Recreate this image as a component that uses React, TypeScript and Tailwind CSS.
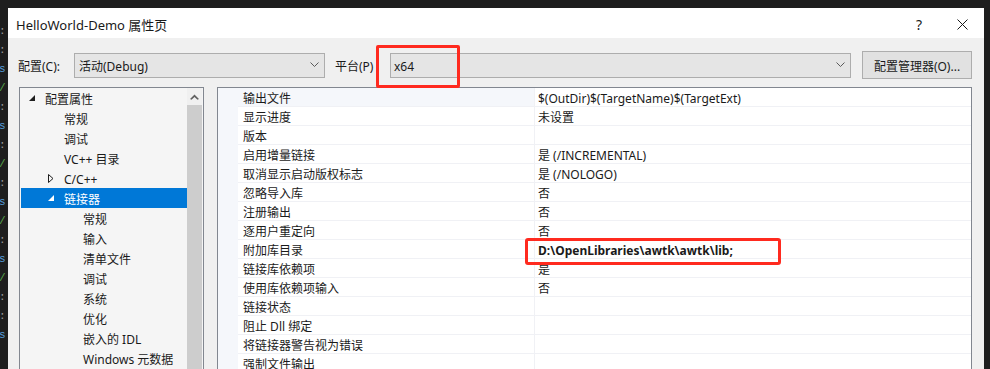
import React from 'react';

const FONT = { fontFamily: '"Noto Sans", "Noto Sans CJK SC", sans-serif' };

type TreeItem = { label: string; level: number; arrow?: 'open' | 'closed'; selected?: boolean };

const treeItems: TreeItem[] = [
  { label: '配置属性', level: 0, arrow: 'open' },
  { label: '常规', level: 1 },
  { label: '调试', level: 1 },
  { label: 'VC++ 目录', level: 1 },
  { label: 'C/C++', level: 1, arrow: 'closed' },
  { label: '链接器', level: 1, arrow: 'open', selected: true },
  { label: '常规', level: 2 },
  { label: '输入', level: 2 },
  { label: '清单文件', level: 2 },
  { label: '调试', level: 2 },
  { label: '系统', level: 2 },
  { label: '优化', level: 2 },
  { label: '嵌入的 IDL', level: 2 },
  { label: 'Windows 元数据', level: 2 },
];

const levelPad = ['pl-[8px]', 'pl-[27px]', 'pl-[46px]'];

const props: { name: string; value: string; bold?: boolean }[] = [
  { name: '输出文件', value: '$(OutDir)$(TargetName)$(TargetExt)' },
  { name: '显示进度', value: '未设置' },
  { name: '版本', value: '' },
  { name: '启用增量链接', value: '是 (/INCREMENTAL)' },
  { name: '取消显示启动版权标志', value: '是 (/NOLOGO)' },
  { name: '忽略导入库', value: '否' },
  { name: '注册输出', value: '否' },
  { name: '逐用户重定向', value: '否' },
  { name: '附加库目录', value: 'D:\\OpenLibraries\\awtk\\awtk\\lib;', bold: true },
  { name: '链接库依赖项', value: '是' },
  { name: '使用库依赖项输入', value: '否' },
  { name: '链接状态', value: '' },
  { name: '阻止 Dll 绑定', value: '' },
  { name: '将链接器警告视为错误', value: '' },
  { name: '强制文件输出', value: '' },
];

// bits of the code editor peeking out behind the dialog
const editorBits = [
  { t: ':', c: 'text-[#9a9a9a]' },
  { t: ':', c: 'text-[#9a9a9a]' },
  { t: 's', c: 'text-[#569cd6]' },
  { t: '/', c: 'text-[#57a64a]' },
  { t: ':', c: 'text-[#9a9a9a]' },
  { t: 's', c: 'text-[#569cd6]' },
  { t: ':', c: 'text-[#9a9a9a]' },
  { t: '/', c: 'text-[#57a64a]' },
  { t: ':', c: 'text-[#9a9a9a]' },
  { t: 's', c: 'text-[#569cd6]' },
  { t: '/', c: 'text-[#57a64a]' },
  { t: ':', c: 'text-[#9a9a9a]' },
  { t: 's', c: 'text-[#569cd6]' },
  { t: '/', c: 'text-[#57a64a]' },
  { t: ':', c: 'text-[#9a9a9a]' },
  { t: ':', c: 'text-[#9a9a9a]' },
  { t: 's', c: 'text-[#569cd6]' },
];

const Chevron = () => (
  <svg width="9" height="6" viewBox="0 0 9 6" fill="none" stroke="#5a5a5a" strokeWidth="1">
    <path d="M0.5 0.5 L4.5 4.5 L8.5 0.5" />
  </svg>
);

const TreeArrow = ({ kind, selected }: { kind: 'open' | 'closed'; selected?: boolean }) =>
  kind === 'open' ? (
    <svg width="7" height="7" viewBox="0 0 7 7">
      <path d="M6 0 L6 6 L0 6 Z" fill={selected ? '#ffffff' : '#1e1e1e'} />
    </svg>
  ) : (
    <svg width="6" height="9" viewBox="0 0 6 9" fill="none" stroke="#1e1e1e" strokeWidth="1">
      <path d="M0.5 0.5 L5 4.5 L0.5 8.5 Z" />
    </svg>
  );

export default function App() {
  return (
    <div className="w-[990px] h-[369px] bg-[#1e1e1e] flex items-start overflow-hidden" style={FONT}>
      {/* editor gutter behind */}
      <div className="w-[8px] h-[369px] shrink-0 flex flex-col pt-[22px] overflow-hidden font-mono text-[11px] leading-[19px]">
        {editorBits.map((b, i) => (
          <span key={i} className={`${b.c} -ml-[1px]`}>{b.t}</span>
        ))}
      </div>

      <div className="relative w-[976px] h-[361px] mt-[8px] flex flex-col overflow-hidden">
        {/* Title bar */}
        <div className="h-[30px] shrink-0 bg-white flex items-center pl-[8px] pr-[14px] pt-[3px] text-[13px] leading-[18px] text-[#1a1a1a]">
          <span className="flex-1">HelloWorld-Demo 属性页</span>
          <span className="text-[14px] mr-[35px]">?</span>
          <svg width="11" height="11" viewBox="0 0 11 11" stroke="#1a1a1a" strokeWidth="1" className="mr-[2px]">
            <path d="M0.5 0.5 L10.5 10.5 M10.5 0.5 L0.5 10.5" />
          </svg>
        </div>

        {/* Body */}
        <div className="flex-1 min-h-0 bg-[#f0f0f0] flex flex-col text-[12px] leading-[17px] text-[#1a1a1a]">
          <div className="flex items-center h-[28px] shrink-0 mt-[13px] pl-[10px]">
            <span className="w-[56px] pt-[2px]">配置(C):</span>
            <div className="w-[251px] h-[25px] bg-[#e5e5e5] border border-[#adadad] flex items-center pl-[4px] pr-[5px]">
              <span className="flex-1 pt-[2px]">活动(Debug)</span>
              <Chevron />
            </div>
            <span className="ml-[10px] w-[55px] pt-[2px]">平台(P)</span>
            <div className="w-[461px] h-[25px] bg-[#e5e5e5] border border-[#adadad] flex items-center pl-[3px] pr-[5px]">
              <span className="flex-1 pt-[2px]">x64</span>
              <Chevron />
            </div>
            <div className="ml-[11px] w-[110px] h-[28px] bg-[#e1e1e1] border border-[#adadad] flex items-center justify-center pt-[2px]">
              配置管理器(O)...
            </div>
          </div>

          <div className="flex flex-1 min-h-0 mt-[8px] pl-[11px]">
            {/* Tree */}
            <div className="w-[185px] border border-[#828790] border-b-0 bg-[#f5f5f5] flex overflow-hidden">
              <div className="flex-1 flex flex-col pl-[1px]">
                {treeItems.map((it, i) => (
                  <div
                    key={i}
                    className={`h-[20px] shrink-0 flex items-center ${levelPad[it.level]} ${
                      it.selected ? 'bg-[#0078d7] text-white' : ''
                    }`}
                  >
                    <span className="w-[16px] flex items-center">
                      {it.arrow && <TreeArrow kind={it.arrow} selected={it.selected} />}
                    </span>
                    <span className="pt-[2px]">{it.label}</span>
                  </div>
                ))}
              </div>
              <div className="w-[15px] flex flex-col mr-[1px]">
                <div className="h-[17px] bg-[#f0f0f0] flex items-center justify-center">
                  <svg width="9" height="6" viewBox="0 0 9 6">
                    <path d="M0 5 L4.5 0.5 L9 5 L7.5 5.8 L4.5 3 L1.5 5.8 Z" fill="#606060" />
                  </svg>
                </div>
                <div className="flex-1 bg-[#cdcdcd]" />
              </div>
            </div>

            {/* Property grid */}
            <div className="ml-[13px] w-[755px] border border-[#828790] border-b-0 bg-white flex overflow-hidden">
              <div className="w-[20px] bg-[#f5f7fb]" />
              <div className="flex-1 flex flex-col">
                {props.map((p, i) => (
                  <div key={i} className="h-[19px] shrink-0 flex border-b border-[#f0f1f5]">
                    <div
                      className={`w-[297px] pl-[5px] pt-[2px] flex items-center border-r border-[#f0f1f5] ${
                        i === 0 ? 'bg-[#f5f7fb]' : ''
                      }`}
                    >
                      {p.name}
                    </div>
                    <div className={`flex-1 pl-[3px] pt-[2px] flex items-center ${p.bold ? 'font-bold' : ''}`}>
                      {p.value}
                    </div>
                  </div>
                ))}
              </div>
            </div>
          </div>
        </div>

        {/* red annotation boxes */}
        <div className="absolute left-[368px] top-[37px] w-[84px] h-[43px] border-[3px] border-[#ff2a1f] rounded-[2px]" />
        <div className="absolute left-[517px] top-[230px] w-[256px] h-[27px] border-[3px] border-[#ff2a1f] rounded-[3px]" />
      </div>
      <div className="flex-1" />
    </div>
  );
}
